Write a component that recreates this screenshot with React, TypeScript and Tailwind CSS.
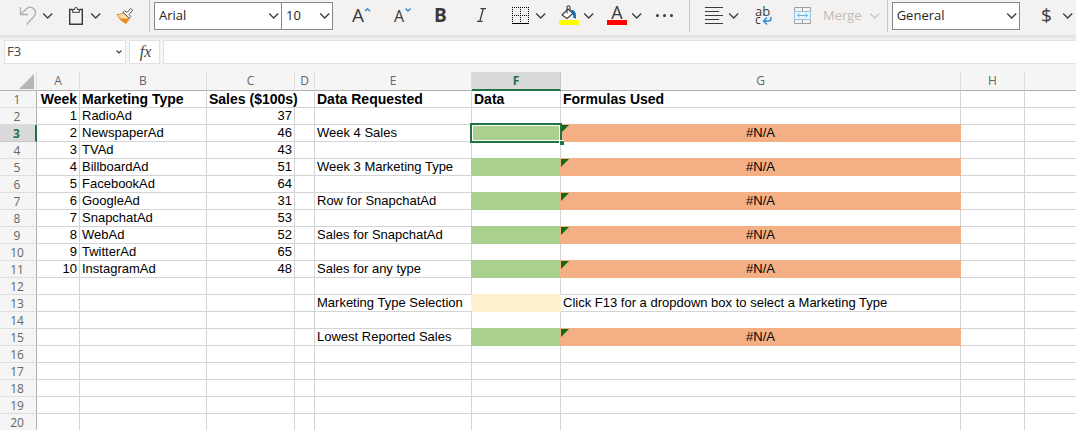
import { ReactNode } from "react";
import clsx from "clsx";

type Fill = "green" | "orange" | "yellow";

interface Column {
  name: string;
  width: string;
}

interface Row {
  week?: number;
  type?: string;
  sales?: number;
  request?: string;
  dataFill?: Fill;
  note?: string;
  formulaError?: boolean;
}

const columns: Column[] = [
  { name: "A", width: "w-[43px]" },
  { name: "B", width: "w-[127px]" },
  { name: "C", width: "w-[88px]" },
  { name: "D", width: "w-5" },
  { name: "E", width: "w-[157px]" },
  { name: "F", width: "w-[89px]" },
  { name: "G", width: "w-[400px]" },
  { name: "H", width: "w-16" },
  { name: "", width: "" },
];

const rows: Row[] = [
  { week: 1, type: "RadioAd", sales: 37 },
  { week: 2, type: "NewspaperAd", sales: 46, request: "Week 4 Sales", dataFill: "green", formulaError: true },
  { week: 3, type: "TVAd", sales: 43 },
  { week: 4, type: "BillboardAd", sales: 51, request: "Week 3 Marketing Type", dataFill: "green", formulaError: true },
  { week: 5, type: "FacebookAd", sales: 64 },
  { week: 6, type: "GoogleAd", sales: 31, request: "Row for SnapchatAd", dataFill: "green", formulaError: true },
  { week: 7, type: "SnapchatAd", sales: 53 },
  { week: 8, type: "WebAd", sales: 52, request: "Sales for SnapchatAd", dataFill: "green", formulaError: true },
  { week: 9, type: "TwitterAd", sales: 65 },
  { week: 10, type: "InstagramAd", sales: 48, request: "Sales for any type", dataFill: "green", formulaError: true },
  {},
  {
    request: "Marketing Type Selection",
    dataFill: "yellow",
    note: "Click F13 for a dropdown box to select a Marketing Type",
  },
  {},
  { request: "Lowest Reported Sales", dataFill: "green", formulaError: true },
  {},
  {},
  {},
  {},
  {},
];

const selected = { column: "F", row: 3 };

// the shadow covers the grid lines above and to the left of a filled cell
const fills: Record<Fill, string> = {
  green: "bg-[#a9d08e] border-[#a9d08e] shadow-[-1px_-1px_0_#a9d08e,0_-1px_0_#a9d08e]",
  orange: "bg-[#f4b084] border-[#f4b084] shadow-[-1px_-1px_0_#f4b084,0_-1px_0_#f4b084]",
  yellow: "bg-[#fff0ce] border-[#fff0ce] shadow-[-1px_-1px_0_#fff0ce,0_-1px_0_#fff0ce]",
};

function Chevron({ className }: { className?: string }) {
  return (
    <svg viewBox="0 0 12 8" className={clsx("h-2 w-3 shrink-0 fill-none stroke-current", className)}>
      <path d="M1.2 1.5 5.7 6l4.5-4.5" strokeWidth="1.3" />
    </svg>
  );
}

interface ToolButtonProps {
  label: string;
  className?: string;
  disabled?: boolean;
  children: ReactNode;
}

function ToolButton({ label, className, disabled, children }: ToolButtonProps) {
  return (
    <button
      aria-label={label}
      disabled={disabled}
      className={clsx("flex shrink-0 items-center", className)}
    >
      {children}
    </button>
  );
}

function Divider({ className }: { className?: string }) {
  return <div className={clsx("h-8 w-px shrink-0 bg-[#c8c6c4]", className)} />;
}

interface ToolSelectProps {
  label: string;
  value: string;
  className?: string;
}

function ToolSelect({ label, value, className }: ToolSelectProps) {
  return (
    <div className={clsx("relative h-7 shrink-0", className)}>
      <select
        aria-label={label}
        defaultValue={value}
        className="h-full w-full appearance-none border border-[#8a8886] bg-white pl-1 text-[13px] text-[#252423]"
      >
        <option>{value}</option>
      </select>
      <Chevron className="pointer-events-none absolute top-2.5 right-0.5" />
    </div>
  );
}

function Toolbar() {
  return (
    <div className="flex h-[35px] items-center overflow-hidden bg-[#f3f2f1] pb-1 text-[#3b3a39]">
      <ToolButton label="Undo" className="ml-[18px]">
        <svg viewBox="0 0 20 20" className="h-5 w-5 fill-none stroke-[#b1afad]" strokeWidth="1.3">
          <path d="M2.5 1v7.5H10M2.8 8.2 8 3.2C11 .5 14 .8 16 3c2.2 2.5 1.8 5.5-.5 8L8.5 18.500" />
        </svg>
      </ToolButton>
      <ToolButton label="Undo options" className="ml-1">
        <Chevron />
      </ToolButton>
      <ToolButton label="Paste" className="ml-3.5">
        <svg viewBox="0 0 16 20" className="h-5 w-4 fill-none stroke-current" strokeWidth="1.4">
          <path d="M4.5 3.5H1.7v14.8h12.6V3.5h-2.8" />
          <path d="M4.7 6.3V3.5h1.8c0-2.7 3-2.7 3 0h1.8v2.8z" fill="white" strokeWidth="1.1" />
        </svg>
      </ToolButton>
      <ToolButton label="Paste options" className="ml-1.5">
        <Chevron />
      </ToolButton>
      <ToolButton label="Format painter" className="ml-3.5">
        <svg viewBox="0 0 18 18" className="h-[18px] w-[18px] fill-none">
          <path d="M1 7.5c2.5.2 4.5-.5 6-2l6.5 6L10 16.5C6.5 14.5 3.5 12 1 7.5z" fill="#fbdda6" stroke="#e38b22" />
          <path d="M2.5 10.5c4 1.500 7 1.500 10.500.5L10 16.300c-3-1.300-5.500-3-7.500-5.800z" fill="#ed8b1c" />
          <path d="m7 5.3 1.5-1.5 2.500 1.700 3.500-4 2.200 1.800-3.700 4.200 1.800 2-1.500 1.700z" fill="#fafafa" stroke="#605e5c" />
        </svg>
      </ToolButton>
      <Divider className="ml-[15px]" />

      <ToolSelect label="Font" value="Arial" className="ml-1 w-32" />
      <ToolSelect label="Font size" value="10" className="-ml-px w-[52px]" />
      <ToolButton label="Increase font size" className="ml-[19px]">
        <svg viewBox="0 0 20 20" className="h-5 w-5 overflow-visible">
          <text x="0" y="16" fontSize="19" fill="currentColor">A</text>
          <path d="m13 5.200 2.500-2.500L18 5.200" fill="none" stroke="#2b88d8" strokeWidth="1.3" />
        </svg>
      </ToolButton>
      <ToolButton label="Decrease font size" className="ml-[22px]">
        <svg viewBox="0 0 18 20" className="h-5 w-[18px] overflow-visible">
          <text x="0" y="16" fontSize="16" fill="currentColor">A</text>
          <path d="m11.5 2.500 2.500 2.500 2.500-2.500" fill="none" stroke="#2b88d8" strokeWidth="1.3" />
        </svg>
      </ToolButton>
      <ToolButton label="Bold" className="ml-[22px]">
        <svg viewBox="0 0 14 20" className="h-5 w-3.5 overflow-visible">
          <text x="0" y="16" fontSize="19" fontWeight="700" fill="currentColor">B</text>
        </svg>
      </ToolButton>
      <ToolButton label="Italic" className="ml-7">
        <svg viewBox="0 0 12 20" className="h-5 w-3 fill-none stroke-current" strokeWidth="1.3">
          <path d="M4.5 2.6H10M1 15.4h5.5M7.3 2.6 3.8 15.4" />
        </svg>
      </ToolButton>
      <ToolButton label="Borders" className="ml-6">
        <svg viewBox="0 0 18 18" className="h-[18px] w-[18px] fill-none stroke-black" shapeRendering="crispEdges">
          <path d="M.5 0v16M16.5 0v16M8.5 0v16M0 .5h17M0 8.5h17" strokeDasharray="1 1" />
          <path d="M0 16.5h17" />
        </svg>
      </ToolButton>
      <ToolButton label="Border options" className="ml-[5px]">
        <Chevron />
      </ToolButton>
      <ToolButton label="Fill color" className="ml-3">
        <svg viewBox="0 0 20 21" className="h-[21px] w-5 fill-none">
          <path d="M3 10 9 4l5 4.500-6 5z" fill="white" stroke="#3b3a39" strokeWidth="1.1" />
          <path d="M8 8.500V2.200C8 .3 11 .3 11 2.200V6" stroke="#3b3a39" strokeWidth="1.1" />
          <path d="M11.5 5c3.500-.5 6 1.500 5.500 8.500l-2.700-.5c.2-3-.3-5-2.800-8z" fill="#106ebe" />
          <path d="M0 15h20v5H0z" fill="#ffff00" />
        </svg>
      </ToolButton>
      <ToolButton label="Fill color options" className="ml-1">
        <Chevron />
      </ToolButton>
      <ToolButton label="Font color" className="ml-3">
        <svg viewBox="0 0 20 21" className="h-[21px] w-5 overflow-visible">
          <text x="10" y="14" fontSize="18" textAnchor="middle" fill="currentColor">A</text>
          <path d="M0 15h20v5H0z" fill="#ff0000" />
        </svg>
      </ToolButton>
      <ToolButton label="Font color options" className="ml-1">
        <Chevron />
      </ToolButton>
      <ToolButton label="More font options" className="ml-3">
        <svg viewBox="0 0 20 4" className="h-1 w-5 fill-current">
          <circle cx="2.5" cy="1.5" r="1.5" />
          <circle cx="9.5" cy="1.5" r="1.5" />
          <circle cx="16.5" cy="1.5" r="1.5" />
        </svg>
      </ToolButton>
      <Divider className="ml-3.5" />

      <ToolButton label="Align" className="ml-[15px]">
        <svg viewBox="0 0 18 18" className="h-[18px] w-[18px] stroke-current" shapeRendering="crispEdges">
          <path d="M0 .5h18M0 4.5h14M0 8.5h18M0 12.5h14M0 16.5h18" />
        </svg>
      </ToolButton>
      <ToolButton label="Align options" className="ml-[5px]">
        <Chevron />
      </ToolButton>
      <ToolButton label="Wrap text" className="ml-3.5">
        <svg viewBox="0 0 20 20" className="h-5 w-5 overflow-visible">
          <text x="1" y="10" fontSize="13" fill="currentColor">ab</text>
          <text x="1" y="18" fontSize="12" fill="currentColor">c</text>
          <path d="M17 11v1.500c0 1.500-1 2.500-2.500 2.500H9.500m3.500-3.500L9.500 15l3.500 3.500" fill="none" stroke="#2b88d8" strokeWidth="1.4" />
        </svg>
      </ToolButton>
      <ToolButton label="Merge" disabled className="ml-5 gap-[11px] text-[13px] text-[#bebbb8]">
        <svg viewBox="0 0 18 18" className="h-[18px] w-[18px] fill-none">
          <path d="M.5 4V.5h16V4M8.5.5V4M.5 13v3.5h16V13M8.5 13v3.5" stroke="#a19f9d" />
          <path d="M.5 4.5h16v8H.5z" fill="#eaf4fb" stroke="#92c5ea" />
          <path d="M3.5 8.5h10M5.5 6.5l-2 2 2 2M11.5 6.5l2 2-2 2" stroke="#71b1e2" />
        </svg>
        <span>Merge</span>
      </ToolButton>
      <ToolButton label="Merge options" disabled className="ml-[7px] text-[#c8c6c4]">
        <Chevron />
      </ToolButton>
      <Divider className="ml-1.5" />

      <ToolSelect label="Number format" value="General" className="ml-1 w-32" />
      <ToolButton label="Currency" className="ml-[21px]">
        <svg viewBox="0 0 12 20" className="h-5 w-3 overflow-visible">
          <text x="0" y="16" fontSize="19" fill="currentColor">$</text>
        </svg>
      </ToolButton>
      <ToolButton label="Currency options" className="ml-[9px]">
        <Chevron />
      </ToolButton>
    </div>
  );
}

function FormulaBar() {
  return (
    <div className="bg-[#f5f5f5] pb-2">
      <div className="h-[5px] bg-linear-to-b from-[#dfdedd] to-[#f3f3f3]" />
      <div className="flex h-6 gap-[3px] pl-1">
        <div className="flex w-[122px] shrink-0 items-center border border-[#e1e1e1] bg-white pr-0.5">
          <input
            aria-label="Name box"
            defaultValue="F3"
            className="min-w-0 flex-1 pl-0.5 text-[13px] text-[#444] outline-none"
          />
          <button aria-label="Named ranges">
            <svg viewBox="0 0 8 6" className="h-1.5 w-2 fill-none stroke-[#444]" strokeWidth="1.2">
              <path d="M1.5 1.5 4 4l2.5-2.5" />
            </svg>
          </button>
        </div>
        <button
          aria-label="Insert function"
          className="w-[31px] shrink-0 border border-[#e1e1e1] bg-white pl-0.5 font-['Liberation_Serif',serif] text-[16px] leading-5 text-[#444] italic"
        >
          fx
        </button>
        <input
          aria-label="Formula"
          className="min-w-0 flex-1 border border-r-0 border-[#e1e1e1] bg-white px-1 text-[13px] outline-none"
        />
      </div>
    </div>
  );
}

interface CellProps {
  fill?: Fill;
  className?: string;
  children?: ReactNode;
}

function Cell({ fill, className, children }: CellProps) {
  return (
    <td
      className={clsx(
        "h-[17px] border-r border-b px-0.5 leading-4 whitespace-nowrap last:border-r-0",
        fill ? fills[fill] : "border-[#d4d4d4]",
        className
      )}
    >
      {children}
    </td>
  );
}

function RowHeader({ row }: { row: number }) {
  return (
    <th
      scope="row"
      className={clsx(
        "h-[17px] border-b pt-0.5 pr-0.5 text-center font-['Open_Sans',sans-serif] text-[12px] leading-[14px]",
        row === selected.row
          ? "border-r-2 border-r-[#217346] border-b-[#c6c6c6] bg-[#d9d9d9] font-bold text-[#217346]"
          : "border-r border-r-[#b1b1b1] border-b-[#dedede] bg-[#f5f5f5] font-normal text-[#666]"
      )}
    >
      {row}
    </th>
  );
}

function Sheet() {
  return (
    <table className="w-full table-fixed border-separate border-spacing-0 bg-white font-['Liberation_Sans',Arial,sans-serif] text-[13px] text-black">
      <colgroup>
        <col className="w-[37px]" />
        {columns.map((column) => (
          <col key={column.name} className={column.width} />
        ))}
      </colgroup>
      <thead>
        <tr className="bg-[#f5f5f5] font-['Open_Sans',sans-serif] text-[12px] leading-4">
          <td className="h-[19px] border-r border-b border-r-[#dedede] border-b-[#b1b1b1]">
            <svg viewBox="0 0 15 15" className="ml-auto mr-0.5 h-[15px] w-[15px] fill-[#b5b5b5]">
              <path d="M15 0v15H0z" />
            </svg>
          </td>
          {columns.map((column) => (
            <th
              key={column.name}
              scope="col"
              className={clsx(
                "h-[19px] text-center last:border-r-0",
                column.name === selected.column
                  ? "border-r border-b-2 border-r-[#c6c6c6] border-b-[#217346] bg-[#d9d9d9] font-bold text-[#217346]"
                  : "border-r border-b border-r-[#dedede] border-b-[#b1b1b1] font-normal text-[#666]"
              )}
            >
              {column.name}
            </th>
          ))}
        </tr>
      </thead>
      <tbody>
        <tr className="text-[14px] font-bold">
          <RowHeader row={1} />
          <Cell className="text-right">Week</Cell>
          <Cell>Marketing Type</Cell>
          <Cell className="border-r-white">Sales ($100s)</Cell>
          <Cell />
          <Cell>Data Requested</Cell>
          <Cell>Data</Cell>
          <Cell>Formulas Used</Cell>
          <Cell />
          <Cell />
        </tr>
        {rows.map((row, i) => {
          const number = i + 2;
          return (
            <tr key={number}>
              <RowHeader row={number} />
              <Cell className="text-right">{row.week}</Cell>
              <Cell>{row.type}</Cell>
              <Cell className="text-right">{row.sales}</Cell>
              <Cell />
              <Cell>{row.request}</Cell>
              <Cell fill={row.dataFill} className="relative">
                {number === selected.row && (
                  <div className="absolute -inset-0.5 z-10 border-2 border-[#217346] outline -outline-offset-3 outline-white">
                    <div className="absolute -right-1 -bottom-1 h-[5px] w-[5px] border-t border-l border-white bg-[#217346]" />
                  </div>
                )}
              </Cell>
              <Cell
                fill={row.formulaError ? "orange" : undefined}
                className={clsx("relative", row.formulaError && "text-center")}
              >
                {row.formulaError && (
                  <svg viewBox="0 0 8 8" className="absolute top-0 left-0 h-2 w-2 fill-[#0f6b14]">
                    <path d="M0 0h8L0 8z" />
                  </svg>
                )}
                {row.formulaError ? "#N/A" : row.note}
              </Cell>
              <Cell />
              <Cell />
            </tr>
          );
        })}
      </tbody>
    </table>
  );
}

export default function App() {
  return (
    <div className="h-screen overflow-hidden bg-white font-['Open_Sans',sans-serif]">
      <Toolbar />
      <FormulaBar />
      <Sheet />
    </div>
  );
}
